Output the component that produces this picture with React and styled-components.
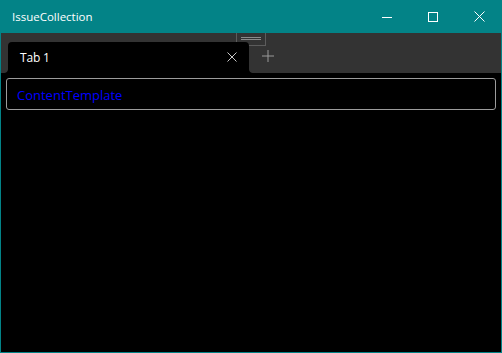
import React from "react";
import styled, { createGlobalStyle } from "styled-components";

const Global = createGlobalStyle`
  html, body { margin: 0; padding: 0; background: #000; }
  body { font-family: "Segoe UI", "Open Sans", "Noto Sans", sans-serif; }
`;

const TEAL = "#038387";
const STRIP = "#333333";

const Window = styled.div`
  width: 502px;
  height: 353px;
  box-sizing: border-box;
  border: 1px solid ${TEAL};
  border-top: none;
  display: flex;
  flex-direction: column;
  background: #000;
  overflow: hidden;
`;

const TitleBar = styled.div`
  height: 33px;
  flex: none;
  background: ${TEAL};
  display: flex;
  align-items: center;
  margin: 0 -1px;
`;

const Title = styled.div`
  flex: 1;
  padding-left: 12px;
  color: #fff;
  font-size: 11.5px;
  line-height: 16px;
  padding-top: 1px;
`;

const CaptionButton = styled.div`
  width: 46px;
  height: 33px;
  display: flex;
  align-items: center;
  justify-content: center;
`;

const TabStrip = styled.div`
  position: relative;
  height: 40px;
  flex: none;
  background: ${STRIP};
  display: flex;
  align-items: flex-end;
  padding-left: 7px;
`;

const Tab = styled.div`
  position: relative;
  width: 241px;
  height: 31px;
  background: #000;
  border-radius: 4px 4px 0 0;
  display: flex;
  align-items: center;
  padding: 0 12px;
  box-sizing: border-box;
  color: #fff;
  font-size: 12px;

  &::before, &::after {
    content: "";
    position: absolute;
    bottom: 0;
    width: 4px;
    height: 4px;
  }
  &::before {
    left: -4px;
    background: radial-gradient(circle at 0 0, transparent 3.5px, #000 4.5px);
  }
  &::after {
    right: -4px;
    background: radial-gradient(circle at 100% 0, transparent 3.5px, #000 4.5px);
  }
`;

const TabLabel = styled.span`
  flex: 1;
  letter-spacing: -0.2px;
`;

const TabClose = styled.div`
  width: 12px;
  height: 12px;
  display: flex;
  align-items: center;
  justify-content: center;
  margin-right: -1px;
  margin-bottom: 2px;
`;

const AddButton = styled.div`
  width: 38px;
  height: 32px;
  display: flex;
  align-items: center;
  justify-content: center;
  padding-bottom: 2px;
  box-sizing: border-box;
`;

const DragHandle = styled.div`
  position: absolute;
  left: 235px;
  top: 0;
  width: 30px;
  height: 13px;
  box-sizing: border-box;
  border: 1px solid #5c5c5c;
  border-top: none;
  background: ${STRIP};
  display: flex;
  flex-direction: column;
  align-items: center;
  justify-content: center;
  gap: 1px;
  padding-bottom: 1px;
`;

const HandleLine = styled.div`
  width: 20px;
  height: 1px;
  background: #8a8a8a;
`;

const Content = styled.div`
  flex: 1;
  padding: 5px;
  background: #000;
`;

const TemplateBox = styled.div`
  height: 32px;
  box-sizing: border-box;
  border: 1px solid #9c9c9c;
  border-radius: 3px;
  display: flex;
  align-items: center;
  padding-left: 10px;
  padding-top: 1px;
  color: #0000ff;
  font-size: 13px;
`;

export default function App() {
  return (
    <>
      <Global />
      <Window>
        <TitleBar>
          <Title>IssueCollection</Title>
          <CaptionButton>
            <svg width="10" height="10" viewBox="0 0 10 10">
              <path d="M0 5.5H10" stroke="#fff" strokeWidth="1" />
            </svg>
          </CaptionButton>
          <CaptionButton>
            <svg width="10" height="10" viewBox="0 0 10 10">
              <rect x="0.5" y="0.5" width="9" height="9" fill="none" stroke="#fff" strokeWidth="1" />
            </svg>
          </CaptionButton>
          <CaptionButton>
            <svg width="11" height="11" viewBox="0 0 11 11">
              <path d="M0.5 0.5L10.5 10.5M10.5 0.5L0.5 10.5" stroke="#fff" strokeWidth="1" />
            </svg>
          </CaptionButton>
        </TitleBar>
        <TabStrip>
          <DragHandle>
            <HandleLine />
            <HandleLine />
          </DragHandle>
          <Tab>
            <TabLabel>Tab 1</TabLabel>
            <TabClose>
              <svg width="10" height="10" viewBox="0 0 10 10">
                <path d="M0.5 0.5L9.5 9.5M9.5 0.5L0.5 9.5" stroke="#c8c8c8" strokeWidth="1" />
              </svg>
            </TabClose>
          </Tab>
          <AddButton>
            <svg width="12" height="12" viewBox="0 0 12 12">
              <path d="M6 0V12M0 6H12" stroke="#9a9a9a" strokeWidth="1" />
            </svg>
          </AddButton>
        </TabStrip>
        <Content>
          <TemplateBox>ContentTemplate</TemplateBox>
        </Content>
      </Window>
    </>
  );
}
